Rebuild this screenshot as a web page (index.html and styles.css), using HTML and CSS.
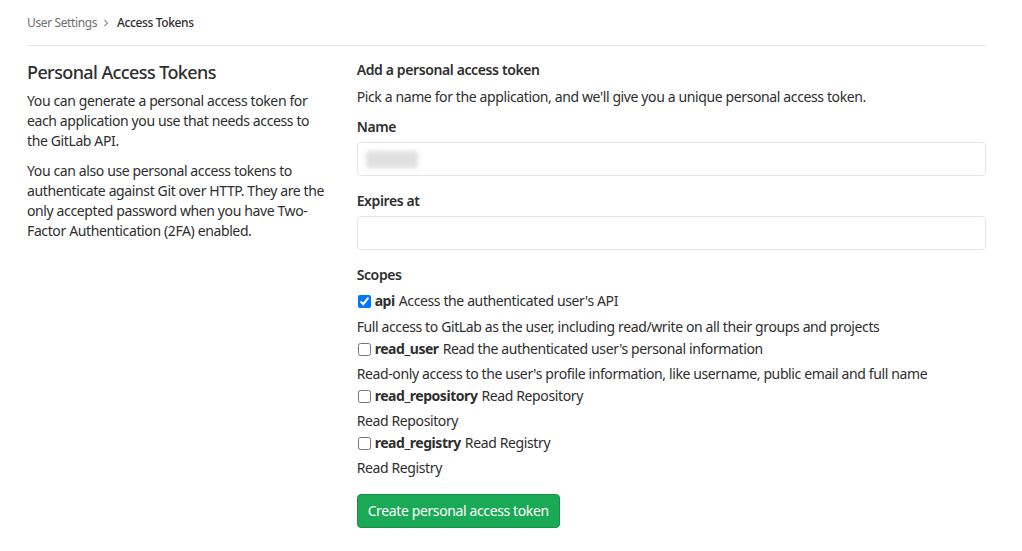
FILE: index.html
```
<!DOCTYPE html>
<html>
<head>
<meta charset="utf-8">
<link rel="stylesheet" href="styles.css">
</head>
<body>
<div class="page">
  <nav class="breadcrumb">
    <a class="crumb">User Settings</a>
    <svg class="chev" width="6" height="8" viewBox="0 0 6 8"><path d="M1.5 1 L4.5 4 L1.5 7" fill="none" stroke="#909090" stroke-width="1.2"/></svg>
    <span class="crumb current">Access Tokens</span>
  </nav>
  <div class="row">
    <div class="side">
      <h4 class="title">Personal Access Tokens</h4>
      <p class="text">You can generate a personal access token for each application you use that needs access to the GitLab API.</p>
      <p class="text">You can also use personal access tokens to authenticate against Git over HTTP. They are the only accepted password when you have Two-Factor Authentication (2FA) enabled.</p>
    </div>
    <div class="main">
      <h5 class="heading">Add a personal access token</h5>
      <p class="hint">Pick a name for the application, and we'll give you a unique personal access token.</p>
      <label class="label">Name</label>
      <div class="field"><span class="blurred"></span></div>
      <label class="label label-gap">Expires at</label>
      <div class="field"></div>
      <label class="label label-gap">Scopes</label>
      <div class="scope first">
        <input type="checkbox" checked class="cb"><span class="scope-name">api</span> <span>Access the authenticated user's API</span>
      </div>
      <div class="scope-desc">Full access to GitLab as the user, including read/write on all their groups and projects</div>
      <div class="scope">
        <input type="checkbox" class="cb"><span class="scope-name">read_user</span> <span>Read the authenticated user's personal information</span>
      </div>
      <div class="scope-desc">Read-only access to the user's profile information, like username, public email and full name</div>
      <div class="scope">
        <input type="checkbox" class="cb"><span class="scope-name">read_repository</span> <span>Read Repository</span>
      </div>
      <div class="scope-desc">Read Repository</div>
      <div class="scope">
        <input type="checkbox" class="cb"><span class="scope-name">read_registry</span> <span>Read Registry</span>
      </div>
      <div class="scope-desc">Read Registry</div>
      <button class="btn">Create personal access token</button>
    </div>
  </div>
</div>
</body>
</html>
```
FILE: styles.css
```
* { box-sizing: border-box; }
html, body { margin: 0; background: #fff; }
body {
  font-family: "Noto Sans", "Open Sans", sans-serif;
  color: #2e2e2e;
  font-size: 14px;
  line-height: 20px;
  letter-spacing: -0.38px;
}
.page {
  width: 959px;
  margin-left: 27px;
}
.breadcrumb {
  height: 46px;
  border-bottom: 1px solid #e5e5e5;
  display: flex;
  align-items: center;
  font-size: 12px;
  letter-spacing: -0.38px;
}
.crumb { color: #707070; }
.chev { margin: 0 8px 0 6px; }
.crumb.current { color: #2e2e2e; font-weight: 500; }
.row {
  display: grid;
  grid-template-columns: 299.67px 1fr;
  column-gap: 30px;
  padding-top: 14px;
}
.title {
  margin: 0 0 7px;
  font-size: 18px;
  line-height: 24px;
  font-weight: 500;
  letter-spacing: -0.6px;
}
.text { margin: 0 0 10px; }
.heading {
  margin: 0;
  font-size: 14px;
  font-weight: 600;
}
.hint { margin: 7px 0 0; }
.label { display: block; font-weight: 600; margin-top: 10px; }
.label-gap { margin-top: 15px; }
.field {
  margin-top: 5px;
  height: 34px;
  border: 1px solid #e5e5e5;
  border-radius: 4px;
  padding: 8px 8px;
  background: #fff;
}
.blurred {
  display: block;
  width: 52px;
  height: 17px;
  background: #e0e0e0;
  filter: blur(2.5px);
  border-radius: 3px;
}
.scope { display: flex; align-items: center; margin-top: 2px; }
.scope.first { margin-top: 6px; }
.cb { margin: 0 4px 0 1px; width: 13px; height: 13px; }
.scope-name { font-weight: 700; margin-right: 4px; letter-spacing: -0.45px; }
.scope-desc { margin-top: 5px; }
.scope.first + .scope-desc { margin-top: 6px; }
.btn {
  margin-top: 16px;
  display: block;
  height: 34px;
  padding: 0 10px;
  font: inherit;
  letter-spacing: inherit;
  color: #fff;
  background: #1aaa55;
  border: 1px solid #168f48;
  border-radius: 4px;
}
```
